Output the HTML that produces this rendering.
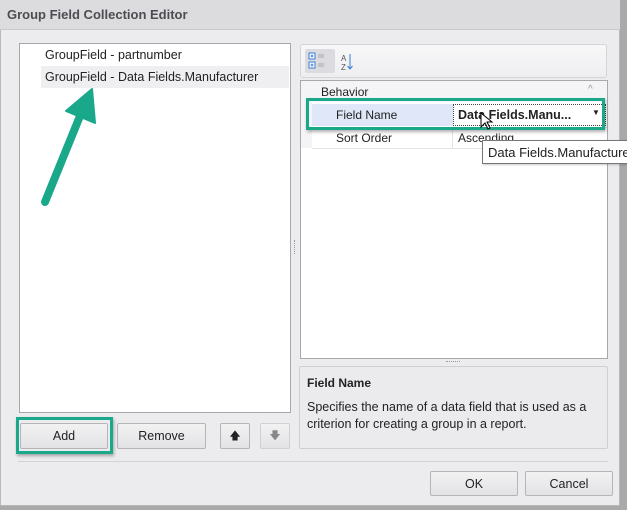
<!DOCTYPE html>
<html><head><style>
body{margin:0;width:627px;height:510px;overflow:hidden;background:#a9a9a9;font-family:"Liberation Sans",sans-serif;font-size:12px;color:#222;position:relative}
.a{position:absolute;box-sizing:border-box}
.btn{position:absolute;box-sizing:border-box;border:1px solid #b5b5b8;border-radius:2px;background:linear-gradient(#f2f2f3,#e3e3e6);text-align:center;line-height:24px;font-size:12.5px;color:#222}
</style></head><body>
<div class="a" style="left:0;top:0;width:620px;height:506px;background:#ececef;border:1px solid #b8b8bc"></div>
<div class="a" style="left:0;top:0;width:620px;height:30px;background:#dcdcdf;border-bottom:1px solid #c9c9cc"></div>
<div class="a" style="left:7px;top:7px;font-weight:bold;font-size:13px;color:#4c4c52">Group Field Collection Editor</div>

<div class="a" style="left:19px;top:43px;width:272px;height:370px;background:#fff;border:1px solid #a8a8ac"></div>
<div class="a" style="left:45px;top:48px;font-size:12.5px">GroupField - partnumber</div>
<div class="a" style="left:41px;top:66px;width:248px;height:22px;background:#efeff1"></div>
<div class="a" style="left:45px;top:70px;font-size:12.5px">GroupField - Data Fields.Manufacturer</div>
<svg class="a" style="left:0;top:0" width="300" height="260"><g fill="#1aa88a" stroke="#1aa88a"><line x1="45" y1="202" x2="80" y2="116" stroke-width="8" stroke-linecap="round"/><polygon points="92,89 66,111 95,123" stroke-width="2" stroke-linejoin="round"/></g></svg>

<div class="a" style="left:294px;top:240px;width:3px;height:14px;border-left:1px dotted #999"></div>

<div class="a" style="left:300px;top:44px;width:307px;height:34px;background:linear-gradient(#f8f8f9,#eeeef0);border:1px solid #d5d5d8;border-radius:3px"></div>
<div class="a" style="left:305px;top:49px;width:30px;height:24px;background:#dcdce0;border-radius:2px"></div>
<svg class="a" style="left:308px;top:52px" width="50" height="20"><rect x="1" y="1" width="6" height="6" fill="#fff" stroke="#3a7bd5"/><rect x="1" y="10" width="6" height="6" fill="#fff" stroke="#3a7bd5"/><path d="M2.5 4h3M4 2.5v3M2.5 13h3M4 11.5v3" stroke="#3a7bd5"/><path d="M10 3h6M10 5h6M10 12h6M10 14h6" stroke="#aaa"/><text x="33" y="9" font-size="8" fill="#555" font-family="Liberation Sans">A</text><text x="33" y="18" font-size="8" fill="#555" font-family="Liberation Sans">Z</text><path d="M42 2v15M39.5 14l2.5 3 2.5-3" stroke="#3a7bd5" fill="none"/></svg>

<div class="a" style="left:300px;top:80px;width:308px;height:279px;background:#fff;border:1px solid #a8a8ac"></div>
<div class="a" style="left:301px;top:81px;width:306px;height:21px;background:#f4f4f6"></div>
<div class="a" style="left:321px;top:85px">Behavior</div>
<div class="a" style="left:588px;top:84px;color:#999;font-size:10px">^</div>
<div class="a" style="left:301px;top:102px;width:11px;height:46px;background:#f4f4f6"></div>
<div class="a" style="left:312px;top:104px;width:141px;height:22px;background:#dfe7f8"></div>
<div class="a" style="left:453px;top:104px;width:153px;height:22px;border:1px dotted #444"></div>
<div class="a" style="left:336px;top:108px">Field Name</div>
<div class="a" style="left:458px;top:108px;font-weight:bold;font-size:12.5px">Data Fields.Manu...</div>
<div class="a" style="left:592px;top:108px;font-size:8px">▼</div>
<div class="a" style="left:312px;top:127px;width:295px;height:22px;border-top:1px solid #e3e3e6;border-bottom:1px solid #e3e3e6"></div>
<div class="a" style="left:452px;top:127px;width:1px;height:22px;background:#e3e3e6"></div>
<div class="a" style="left:336px;top:131px">Sort Order</div>
<div class="a" style="left:458px;top:131px">Ascending</div>
<div class="a" style="left:306px;top:98px;width:299px;height:32px;border:3px solid #1aa88a;box-shadow:1px 2px 3px rgba(0,0,0,.3)"></div>
<div class="a" style="left:482px;top:140px;width:170px;height:24px;background:#fff;border:1px solid #767676;padding:4px 5px;white-space:nowrap;font-size:13px;box-shadow:1px 1px 2px rgba(0,0,0,.2)">Data Fields.Manufacturer</div>
<svg class="a" style="left:480px;top:112px" width="14" height="20"><path d="M1 1v14l4-4 3 6 2-1-3-6h5z" fill="#fff" stroke="#000"/></svg>

<div class="a" style="left:446px;top:361px;width:14px;height:2px;border-top:1px dotted #999"></div>
<div class="a" style="left:299px;top:366px;width:309px;height:83px;border:1px solid #cfcfd3;border-radius:2px;background:#ebebee"></div>
<div class="a" style="left:307px;top:376px;font-weight:bold">Field Name</div>
<div class="a" style="left:307px;top:399px;line-height:17px;font-size:12.5px">Specifies the name of a data field that is used as a<br>criterion for creating a group in a report.</div>

<div class="btn" style="left:20px;top:423px;width:88px;height:26px">Add</div>
<div class="a" style="left:16px;top:417px;width:97px;height:37px;border:3px solid #1aa88a;box-shadow:1px 2px 3px rgba(0,0,0,.3)"></div>
<div class="btn" style="left:117px;top:423px;width:89px;height:26px">Remove</div>
<div class="btn" style="left:220px;top:423px;width:30px;height:26px;font-size:11px">🡅</div>
<div class="btn" style="left:260px;top:423px;width:30px;height:26px;font-size:11px;color:#888;border-color:#d0d0d3">🡇</div>
<div class="a" style="left:18px;top:461px;width:590px;height:1px;background:#d3d3d6"></div>
<div class="btn" style="left:430px;top:471px;width:88px;height:25px">OK</div>
<div class="btn" style="left:525px;top:471px;width:88px;height:25px">Cancel</div>
</body></html>
